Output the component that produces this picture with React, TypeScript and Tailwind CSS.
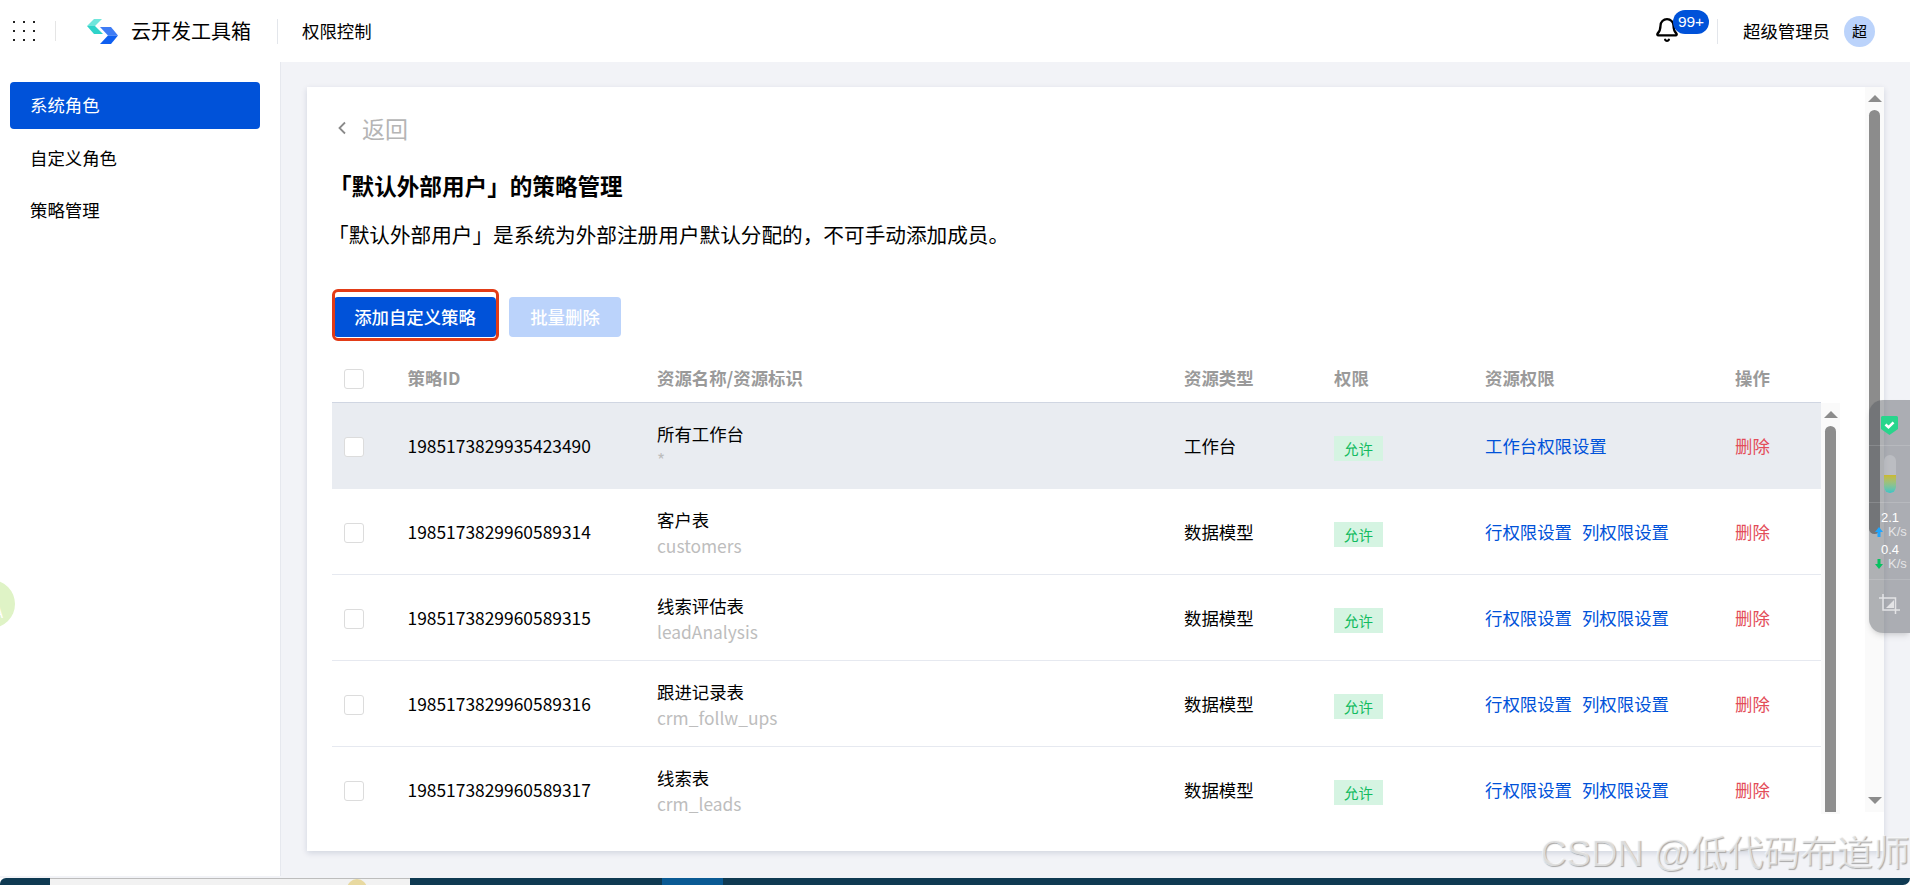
import { Bell } from "lucide-react";

const rows = [
  { id: "1985173829935423490", name: "所有工作台", key: "*", type: "工作台", first: true },
  { id: "1985173829960589314", name: "客户表", key: "customers", type: "数据模型" },
  { id: "1985173829960589315", name: "线索评估表", key: "leadAnalysis", type: "数据模型" },
  { id: "1985173829960589316", name: "跟进记录表", key: "crm_follw_ups", type: "数据模型" },
  { id: "1985173829960589317", name: "线索表", key: "crm_leads", type: "数据模型" },
];

const cols = "grid grid-cols-[75.500px_249.500px_527px_150px_151px_250px_86px] items-center";

function Tri({ down = false }: { down?: boolean }) {
  return (
    <svg width="14" height="7" viewBox="0 0 14 7" className="block">
      <polygon points={down ? "0,0 14,0 7,7" : "7,0 14,7 0,7"} fill="#8c8c8c" />
    </svg>
  );
}

function Check() {
  return <div className="h-[20px] w-[20px] rounded-[3px] border border-[#dcdcdc] bg-white ml-[12px]" />;
}

function Logo() {
  return (
    <svg width="32" height="25" viewBox="7 6 32 25">
      <polygon points="7,13 14,6 22,6 15,13" fill="#6fe6dc" />
      <polygon points="7,13 15,13 23,21 14,21" fill="#2fd3c9" />
      <polygon points="20,14 31,14 38,22.500 28,22.500" fill="#3f7cf5" />
      <polygon points="20,31 31,31 38,22.500 28,22.500" fill="#0f5ff0" />
    </svg>
  );
}

function Widget() {
  return (
    <div className="absolute left-[1869px] top-[400px] w-[41px] h-[233px] rounded-l-[14px] bg-[#55585f]/45 shadow-md flex flex-col items-center text-white">
      <div className="h-[46px] w-full flex items-center justify-center pt-[5px] border-b border-white/15">
        <svg width="17" height="19" viewBox="0 0 17 19">
          <path d="M1.500 0h14a1.500 1.500 0 0 1 1.500 1.500V13l-8.500 6L0 13V1.500A1.500 1.500 0 0 1 1.500 0z" fill="#28d58c" />
          <path d="M4.500 8.500l3 2.800 5-5" stroke="#fff" strokeWidth="2.600" fill="none" />
        </svg>
      </div>
      <div className="h-[57px] w-full flex items-center justify-center border-b border-white/15">
        <div className="h-[38px] w-[12px] rounded-full bg-white/20 flex flex-col justify-end overflow-hidden">
          <div className="h-[18px] bg-gradient-to-b from-[#c9b92a] to-[#33c5c5]" />
        </div>
      </div>
      <div className="h-[77px] w-full border-b border-white/15 flex flex-col justify-center text-[13px] leading-[14px] font-['Liberation_Sans']">
        <div className="pl-[12px]">2.1</div>
        <div className="flex items-center pl-[6px] gap-[5px] text-white/70">
          <svg width="8" height="10" viewBox="0 0 8 10"><path d="M4 0l4 5H5.500v5h-3V5H0z" fill="#1ea5ff" /></svg>
          K/s
        </div>
        <div className="pl-[12px] mt-[4px]">0.4</div>
        <div className="flex items-center pl-[6px] gap-[5px] text-white/70">
          <svg width="8" height="10" viewBox="0 0 8 10"><path d="M4 10l4-5H5.500V0h-3v5H0z" fill="#07c160" /></svg>
          K/s
        </div>
      </div>
      <div className="flex-1 flex items-start pt-[14px] justify-center">
        <svg width="21" height="20" viewBox="0 0 21 20" fill="none" stroke="#e4e4e6" strokeWidth="1.500">
          <path d="M4 0v16h17M0 4h16.500v16" />
          <polygon points="15,6 15,14 7,14" fill="#e4e4e6" stroke="none" />
        </svg>
      </div>
    </div>
  );
}

export default function App() {
  return (
    <div className="relative w-[1910px] h-[885px] overflow-hidden flex flex-col bg-white text-black font-['Noto_Sans_CJK_SC','Noto_Sans',sans-serif] text-[17.4px]">
      <header className="h-[62px] shrink-0 flex items-center bg-white">
        <div className="ml-[13px] grid grid-cols-3 gap-x-[8px] gap-y-[7px]">
          {Array.from({ length: 9 }).map((_, i) => (
            <span key={i} className="h-[2px] w-[2px] bg-[#222]" />
          ))}
        </div>
        <div className="ml-[20px] h-[20px] w-px bg-[#e5e5e5]" />
        <div className="ml-[31px]"><Logo /></div>
        <div className="ml-[12px] text-[20px] leading-none">云开发工具箱</div>
        <div className="ml-[26px] h-[25px] w-px bg-[#e3e6eb]" />
        <div className="ml-[24px] leading-none">权限控制</div>
        <div className="flex-1" />
        <div className="relative mr-[37px] -mt-[2px]">
          <Bell size={26} strokeWidth={2.1} className="text-black" />
          <span className="absolute left-[19px] top-[-7px] h-[24px] w-[36px] rounded-full bg-[#0052d9] text-white text-[15.500px] leading-[24px] text-center font-['Liberation_Sans']">99+</span>
        </div>
        <div className="h-[25px] w-px bg-[#e3e6eb]" />
        <div className="ml-[25px] leading-none">超级管理员</div>
        <div className="ml-[14px] mr-[35px] h-[31px] w-[31px] rounded-full bg-[#bbd3fb] flex items-center justify-center text-[15px]">超</div>
      </header>

      <div className="flex-1 flex min-h-0">
        <aside className="w-[281px] shrink-0 border-r border-[#e6e8ee] bg-white pt-[20px] px-[10px]">
          <div className="h-[47px] mb-[5.500px] w-[250px] rounded-[4px] bg-[#0052d9] text-white flex items-center pl-[20px]">系统角色</div>
          <div className="h-[47px] mb-[5.500px] flex items-center pl-[20px]">自定义角色</div>
          <div className="h-[47px] flex items-center pl-[20px]">策略管理</div>
        </aside>

        <main className="flex-1 min-w-0 bg-[#f2f3f7] pt-[25px] pl-[26px] pr-[26px] pb-[25px]">
          <div className="h-[764px] bg-white shadow-[0_2px_6px_rgba(0,30,80,0.14)] flex">
            <div className="flex-1 min-w-0 pl-[25px] pt-[26px]">
              <div className="h-[30px] flex items-center text-[#b5b5b5] text-[23px]">
                <svg width="10" height="14" viewBox="0 0 10 14" className="ml-[5px] mr-[15px]">
                  <path d="M8 1.500L2.500 7 8 12.500" fill="none" stroke="#8a8a8a" strokeWidth="1.800" />
                </svg>
                返回
              </div>
              <div className="mt-[28px] h-[30px] flex items-center font-bold text-[22.600px] -ml-[3px] leading-none">「默认外部用户」的策略管理</div>
              <div className="mt-[18px] h-[30px] flex items-center text-[20.650px] -ml-[4px] leading-none">「默认外部用户」是系统为外部注册用户默认分配的，不可手动添加成员。</div>

              <div className="mt-[48px] ml-[2px] flex gap-[13px]">
                <button className="relative h-[40px] w-[162px] rounded-[4px] bg-[#0052d9] text-white font-medium">
                  添加自定义策略
                  <span className="absolute -left-[2px] -right-[3px] -top-[8px] -bottom-[4px] rounded-[6px] border-[3px] border-[#e23c17]" />
                </button>
                <button className="h-[40px] w-[112px] rounded-[4px] bg-[#bbd3fb] text-white font-medium">批量删除</button>
              </div>

              <div className={`${cols} mt-[18px] w-[1489px] h-[48px] border-b border-[#d0d6e2] text-[#9a9a9a] font-bold`}>
                <Check />
                <div>策略ID</div>
                <div>资源名称/资源标识</div>
                <div>资源类型</div>
                <div>权限</div>
                <div>资源权限</div>
                <div>操作</div>
              </div>

              <div className="flex h-[411px] w-[1508px] overflow-hidden">
                <div className="w-[1489px] shrink-0">
                  {rows.map((r) => (
                    <div key={r.id} className={`${cols} h-[86px] pt-[2px] border-b ${r.first ? "bg-[#e9ecf1] border-[#e9ecf1]" : "border-[#e6e9f0]"}`}>
                      <Check />
                      <div>{r.id}</div>
                      <div>
                        <div className="leading-[26px]">{r.name}</div>
                        <div className="leading-[25px] text-[#bdbdbd]">{r.key}</div>
                      </div>
                      <div>{r.type}</div>
                      <div>
                        <span className="mt-[4px] flex h-[25px] w-[49px] items-center justify-center bg-[#d5f4e2] text-[#12bb5f] text-[14.500px]">允许</span>
                      </div>
                      <div className="flex gap-[10px] text-[#0052d9]">
                        {r.first ? <span>工作台权限设置</span> : (<><span>行权限设置</span><span>列权限设置</span></>)}
                      </div>
                      <div className="text-[#e34d59]">删除</div>
                    </div>
                  ))}
                </div>
                <div className="w-[19px] bg-[#fafafa] flex flex-col items-center pt-[8px]">
                  <Tri />
                  <div className="mt-[8px] mb-[2px] flex-1 w-[11px] rounded-t-full bg-[#8c8c8c]" />
                </div>
              </div>
            </div>

            <div className="w-[19px] shrink-0 h-[725px] bg-[#fafafa] flex flex-col items-center pt-[8px] pb-[8px]">
              <Tri />
              <div className="mt-[8px] h-[424px] w-[11px] rounded-full bg-[#8c8c8c]" />
              <div className="flex-1" />
              <Tri down />
            </div>
          </div>
        </main>
      </div>

      <div className="h-[2px] shrink-0 bg-[#f2f3f7]" />
      <div className="h-[7px] shrink-0 flex">
        <div className="w-[50px] rounded-tl-[6px] bg-[#0f3a52]" />
        <div className="relative w-[360px] bg-[#f2f2f2] border-t border-[#bdbdbd]">
          <span className="absolute left-[297px] top-0 h-[10px] w-[20px] rounded-t-full bg-[#e8d9a0]" />
        </div>
        <div className="w-[252px] bg-[#0f3a52]" />
        <div className="w-[61px] bg-[#0a5a94]" />
        <div className="flex-1 rounded-br-[8px] bg-[#0f3a52]" />
      </div>

      <div className="absolute left-[-33px] top-[580px] h-[48px] w-[48px] rounded-full bg-[#dff3c6] flex items-center justify-end pr-[12px] pt-[16px] text-white text-[14px]">A</div>

      <Widget />

      <div className="absolute left-[1540px] top-[832px] font-['Liberation_Sans','Noto_Sans_CJK_SC',sans-serif] text-[36.500px] leading-[44px] whitespace-nowrap text-white/60 [text-shadow:1px_1px_1px_#a8a8a8]">CSDN @低代码布道师</div>
    </div>
  );
}
